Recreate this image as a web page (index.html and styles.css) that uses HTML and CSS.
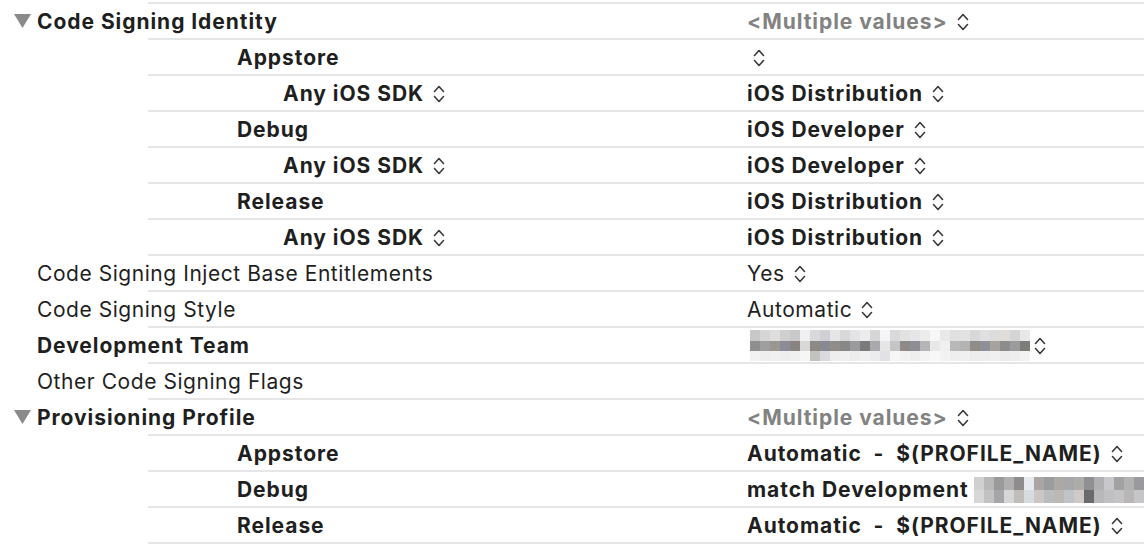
FILE: index.html
```html
<!DOCTYPE html>
<html>
<head>
<meta charset="utf-8">
<link rel="stylesheet" href="styles.css">
</head>
<body>
<div class="table">
  <div class="row">
    <div class="label bold"><span class="disclosure"><svg width="17" height="14" viewBox="0 0 17 14"><polygon points="0,0 17,0 8.5,14" fill="#8a8a8a"/></svg></span>Code Signing Identity</div>
    <div class="value bold muted">&lt;Multiple values&gt;<svg class="stepper" viewBox="0 0 12 20"><path d="M1.5 7.5 L6 2.5 L10.5 7.5 M1.5 12.5 L6 17.5 L10.5 12.5"/></svg></div>
  </div>
  <div class="row">
    <div class="label bold l1">Appstore</div>
    <div class="value bold solo"><svg class="stepper" viewBox="0 0 12 20"><path d="M1.5 7.5 L6 2.5 L10.5 7.5 M1.5 12.5 L6 17.5 L10.5 12.5"/></svg></div>
  </div>
  <div class="row">
    <div class="label bold l2">Any iOS SDK<svg class="stepper" viewBox="0 0 12 20"><path d="M1.5 7.5 L6 2.5 L10.5 7.5 M1.5 12.5 L6 17.5 L10.5 12.5"/></svg></div>
    <div class="value bold">iOS Distribution<svg class="stepper" viewBox="0 0 12 20"><path d="M1.5 7.5 L6 2.5 L10.5 7.5 M1.5 12.5 L6 17.5 L10.5 12.5"/></svg></div>
  </div>
  <div class="row">
    <div class="label bold l1">Debug</div>
    <div class="value bold">iOS Developer<svg class="stepper" viewBox="0 0 12 20"><path d="M1.5 7.5 L6 2.5 L10.5 7.5 M1.5 12.5 L6 17.5 L10.5 12.5"/></svg></div>
  </div>
  <div class="row">
    <div class="label bold l2">Any iOS SDK<svg class="stepper" viewBox="0 0 12 20"><path d="M1.5 7.5 L6 2.5 L10.5 7.5 M1.5 12.5 L6 17.5 L10.5 12.5"/></svg></div>
    <div class="value bold">iOS Developer<svg class="stepper" viewBox="0 0 12 20"><path d="M1.5 7.5 L6 2.5 L10.5 7.5 M1.5 12.5 L6 17.5 L10.5 12.5"/></svg></div>
  </div>
  <div class="row">
    <div class="label bold l1">Release</div>
    <div class="value bold">iOS Distribution<svg class="stepper" viewBox="0 0 12 20"><path d="M1.5 7.5 L6 2.5 L10.5 7.5 M1.5 12.5 L6 17.5 L10.5 12.5"/></svg></div>
  </div>
  <div class="row">
    <div class="label bold l2">Any iOS SDK<svg class="stepper" viewBox="0 0 12 20"><path d="M1.5 7.5 L6 2.5 L10.5 7.5 M1.5 12.5 L6 17.5 L10.5 12.5"/></svg></div>
    <div class="value bold">iOS Distribution<svg class="stepper" viewBox="0 0 12 20"><path d="M1.5 7.5 L6 2.5 L10.5 7.5 M1.5 12.5 L6 17.5 L10.5 12.5"/></svg></div>
  </div>
  <div class="row">
    <div class="label l0">Code Signing Inject Base Entitlements</div>
    <div class="value">Yes<svg class="stepper" viewBox="0 0 12 20"><path d="M1.5 7.5 L6 2.5 L10.5 7.5 M1.5 12.5 L6 17.5 L10.5 12.5"/></svg></div>
  </div>
  <div class="row">
    <div class="label l0">Code Signing Style</div>
    <div class="value">Automatic<svg class="stepper" viewBox="0 0 12 20"><path d="M1.5 7.5 L6 2.5 L10.5 7.5 M1.5 12.5 L6 17.5 L10.5 12.5"/></svg></div>
  </div>
  <div class="row">
    <div class="label bold l0">Development Team</div>
    <div class="value bold"><div class="blur team"><div class="px t1"></div><div class="px t2"></div><div class="px t3"></div></div><svg class="stepper tight" viewBox="0 0 12 20"><path d="M1.5 7.5 L6 2.5 L10.5 7.5 M1.5 12.5 L6 17.5 L10.5 12.5"/></svg></div>
  </div>
  <div class="row">
    <div class="label l0">Other Code Signing Flags</div>
    <div class="value"></div>
  </div>
  <div class="row">
    <div class="label bold"><span class="disclosure"><svg width="17" height="14" viewBox="0 0 17 14"><polygon points="0,0 17,0 8.5,14" fill="#8a8a8a"/></svg></span>Provisioning Profile</div>
    <div class="value bold muted">&lt;Multiple values&gt;<svg class="stepper" viewBox="0 0 12 20"><path d="M1.5 7.5 L6 2.5 L10.5 7.5 M1.5 12.5 L6 17.5 L10.5 12.5"/></svg></div>
  </div>
  <div class="row">
    <div class="label bold l1">Appstore</div>
    <div class="value bold pre">Automatic  -  $(PROFILE_NAME)<svg class="stepper" viewBox="0 0 12 20"><path d="M1.5 7.5 L6 2.5 L10.5 7.5 M1.5 12.5 L6 17.5 L10.5 12.5"/></svg></div>
  </div>
  <div class="row">
    <div class="label bold l1">Debug</div>
    <div class="value bold">match Development<div class="blur match"><div class="px m1"></div><div class="px m2"></div></div></div>
  </div>
  <div class="row last">
    <div class="label bold l1">Release</div>
    <div class="value bold pre">Automatic  -  $(PROFILE_NAME)<svg class="stepper" viewBox="0 0 12 20"><path d="M1.5 7.5 L6 2.5 L10.5 7.5 M1.5 12.5 L6 17.5 L10.5 12.5"/></svg></div>
  </div>
</div>
</body>
</html>
```

FILE: styles.css
```css
html, body {
  margin: 0;
  padding: 0;
  background: #ffffff;
}

body {
  font-family: Inter, "Liberation Sans", sans-serif;
  font-size: 21px;
  letter-spacing: 0.55px;
  color: #1f1f1f;
  width: 1144px;
  height: 552px;
  overflow: hidden;
}

.table {
  padding-top: 2px;
  display: flex;
  flex-direction: column;
}

.row {
  height: 36px;
  box-sizing: border-box;
  padding-top: 3px;
  display: flex;
  align-items: center;
  background: linear-gradient(#e6e6e6, #e6e6e6) no-repeat 148px 0 / calc(100% - 148px) 2px;
  white-space: nowrap;
}

.row.last {
  height: 38px;
  padding-bottom: 2px;
  background:
    linear-gradient(#e6e6e6, #e6e6e6) no-repeat 148px 0 / calc(100% - 148px) 2px,
    linear-gradient(#e6e6e6, #e6e6e6) no-repeat 148px 100% / calc(100% - 148px) 2px;
}

.label {
  width: 747px;
  flex: none;
  display: flex;
  align-items: center;
  height: 33px;
  box-sizing: border-box;
}

.label.l0 { padding-left: 37px; }
.label.l1 { padding-left: 237px; }
.label.l2 { padding-left: 283px; }

.disclosure {
  display: flex;
  margin-left: 14px;
  margin-right: 6px;
  margin-top: -1px;
}

.value {
  flex: 1;
  display: flex;
  align-items: center;
  height: 33px;
  min-width: 0;
  overflow: hidden;
}

.value.solo { padding-left: 6px; }

.bold {
  font-weight: 700;
  letter-spacing: 0.95px;
}
.muted { color: #828282; }
.pre { white-space: pre; }

.stepper {
  width: 12px;
  height: 20px;
  margin-left: 9px;
  flex: none;
  fill: none;
  stroke: #3a3a3a;
  stroke-width: 1.6;
  stroke-linecap: round;
  stroke-linejoin: round;
}

.value.solo .stepper { margin-left: 0; }
.stepper.tight { margin-left: 4px; }

.blur {
  display: flex;
  flex-direction: column;
  flex: none;
}

.blur.team {
  width: 280px;
  margin-left: 3px;
}

.blur.team .px { height: 10px; }
.blur.team .t1 { height: 11px; }

.blur.match {
  width: 172px;
  margin-left: 5px;
}

.blur.match .px { height: 13px; }

.t1 {
  background: linear-gradient(90deg,
    #c8c8c8 0 10px, #d6d6d6 10px 20px, #e0dedc 20px 30px, #cfcfcf 30px 40px,
    #c9c9cc 40px 50px, #f0f0f2 50px 60px, #d9d9db 60px 70px, #d0d0d4 70px 80px,
    #e6e6e8 80px 90px, #d8d8d8 90px 100px, #e4e4e6 100px 110px, #ececee 110px 120px,
    #d6d6d6 120px 130px, #f5f5f7 130px 140px, #d9d9dc 140px 150px, #e2e2e2 150px 160px,
    #e6e6e8 160px 170px, #ececec 170px 180px, #f7f7f7 180px 190px, #e9e9eb 190px 200px,
    #e0e0e0 200px 210px, #e2e2e2 210px 220px, #d8d8d8 220px 230px, #e0e0e2 230px 240px,
    #dcdcdc 240px 250px, #e0dcd8 250px 260px, #d5d5d5 260px 270px, #e8e8e8 270px 280px);
}

.t2 {
  background: linear-gradient(90deg,
    #8f8f8f 0 10px, #9e9e9e 10px 20px, #9a9690 20px 30px, #8c8c94 30px 40px,
    #898480 40px 50px, #d8d8d8 50px 60px, #8d8a86 60px 70px, #878a90 70px 80px,
    #8f8c8a 80px 90px, #888888 90px 100px, #9a9a9c 100px 110px, #7a7a7a 110px 120px,
    #aaaaae 120px 130px, #e6e6e6 130px 140px, #c5c5c5 140px 150px, #8e8a88 150px 160px,
    #8e8e96 160px 170px, #b5b5b8 170px 180px, #e8e8e8 180px 190px, #f0f0f0 190px 200px,
    #b8b8b8 200px 210px, #b3b3b3 210px 220px, #8f8c8a 220px 230px, #8e9098 230px 240px,
    #a6a29e 240px 250px, #8d8d8d 250px 260px, #9b9b9b 260px 270px, #7e7c78 270px 280px);
}

.t3 {
  background: linear-gradient(90deg,
    #f2f2f2 0 10px, #eeeeee 10px 20px, #f0f0f0 20px 30px, #eeeeef 30px 40px,
    #f0f0f0 40px 50px, #f6f6f6 50px 60px, #c2c2be 60px 70px, #dadade 70px 80px,
    #eeeeee 80px 90px, #f0f0f0 90px 100px, #ececec 100px 110px, #f0f0f2 110px 120px,
    #ececee 120px 130px, #e2e2e6 130px 140px, #f6f6f6 140px 150px, #f2f2f2 150px 160px,
    #eeeeee 160px 170px, #f4f4f4 170px 180px, #f8f8f8 180px 190px, #f2f2f2 190px 200px,
    #eeeeee 200px 210px, #f0f0f0 210px 220px, #ececec 220px 230px, #eeeeee 230px 240px,
    #f0f0f0 240px 250px, #ececec 250px 260px, #eeeeee 260px 270px, #f2f2f2 270px 280px);
}

.m1 {
  background: linear-gradient(90deg,
    #d0d0d0 0 10px, #b8b8b8 10px 20px, #9a9a9a 20px 30px, #b0aeae 30px 40px,
    #8e8c8c 40px 50px, #e6eaee 50px 60px, #aba6a4 60px 70px, #9a9c9e 70px 80px,
    #aca8a4 80px 90px, #a8a8aa 90px 100px, #aeaca8 100px 110px, #8e9094 110px 120px,
    #b0b0b2 120px 130px, #c8c8cc 130px 140px, #a2a2a2 140px 150px, #b2b2b2 150px 160px,
    #9a9a9e 160px 170px, #7a1a1a 170px 172px);
}

.m2 {
  background: linear-gradient(90deg,
    #d8d8d8 0 10px, #c2c2c4 10px 20px, #a6a6a8 20px 30px, #d6d6d6 30px 40px,
    #c0bdbb 40px 50px, #d6dce0 50px 60px, #ccc6c4 60px 70px, #babcbe 70px 80px,
    #bcb8b4 80px 90px, #c0c4c8 90px 100px, #cecac6 100px 110px, #6a6a6c 110px 120px,
    #b8b8ba 120px 130px, #c0c0c2 130px 140px, #c4c4c6 140px 150px, #b8b6b6 150px 160px,
    #c6c6c8 160px 170px, #9a5050 170px 172px);
}
```
